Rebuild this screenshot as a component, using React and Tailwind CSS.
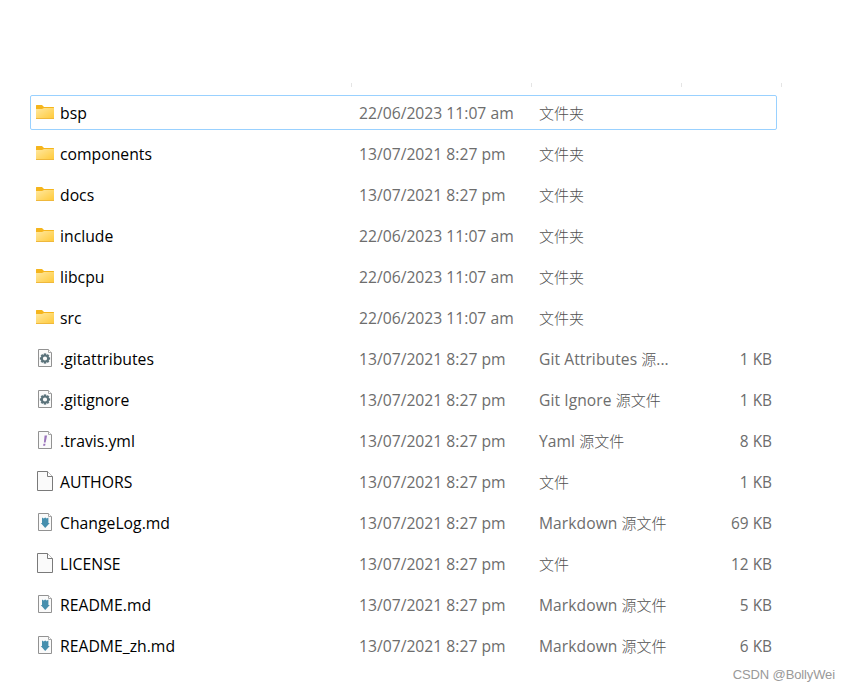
const entries = [
  { icon: 'folder', name: 'bsp', date: '22/06/2023 11:07 am', type: ['', '文件夹'], selected: true },
  { icon: 'folder', name: 'components', date: '13/07/2021 8:27 pm', type: ['', '文件夹'] },
  { icon: 'folder', name: 'docs', date: '13/07/2021 8:27 pm', type: ['', '文件夹'] },
  { icon: 'folder', name: 'include', date: '22/06/2023 11:07 am', type: ['', '文件夹'] },
  { icon: 'folder', name: 'libcpu', date: '22/06/2023 11:07 am', type: ['', '文件夹'] },
  { icon: 'folder', name: 'src', date: '22/06/2023 11:07 am', type: ['', '文件夹'] },
  { icon: 'gear', name: '.gitattributes', date: '13/07/2021 8:27 pm', type: ['Git Attributes ', '源', '...'], size: '1 KB' },
  { icon: 'gear', name: '.gitignore', date: '13/07/2021 8:27 pm', type: ['Git Ignore ', '源文件'], size: '1 KB' },
  { icon: 'yaml', name: '.travis.yml', date: '13/07/2021 8:27 pm', type: ['Yaml ', '源文件'], size: '8 KB' },
  { icon: 'file', name: 'AUTHORS', date: '13/07/2021 8:27 pm', type: ['', '文件'], size: '1 KB' },
  { icon: 'markdown', name: 'ChangeLog.md', date: '13/07/2021 8:27 pm', type: ['Markdown ', '源文件'], size: '69 KB' },
  { icon: 'file', name: 'LICENSE', date: '13/07/2021 8:27 pm', type: ['', '文件'], size: '12 KB' },
  { icon: 'markdown', name: 'README.md', date: '13/07/2021 8:27 pm', type: ['Markdown ', '源文件'], size: '5 KB' },
  { icon: 'markdown', name: 'README_zh.md', date: '13/07/2021 8:27 pm', type: ['Markdown ', '源文件'], size: '6 KB' },
]

const teeth = [0, 45, 90, 135, 180, 225, 270, 315]

function FolderIcon() {
  return (
    <svg width="20" height="23" viewBox="0 0 20 23">
      <defs>
        <linearGradient id="folder-front" x1="0" y1="0" x2="1" y2="1">
          <stop offset="0" stopColor="#ffe8a0" />
          <stop offset="1" stopColor="#ffc937" />
        </linearGradient>
      </defs>
      <path d="M1 5.5Q1 5 1.5 5H7L9 7H18.5Q19 7 19 7.5V12H1Z" fill="#f5b51c" />
      <path d="M1 9H7L9 8H19V18.5Q19 19 18.5 19H1.5Q1 19 1 18.5Z" fill="url(#folder-front)" />
      <path d="M1 18.5H19" stroke="#efb83c" />
    </svg>
  )
}

// Small page used for the types that belong to an editor
function EditorPage({ children }) {
  return (
    <svg width="20" height="23" viewBox="0 0 20 23">
      <path d="M3.5 3.5H13.5L16.5 6.5V20.5H3.5Z" fill="#fafafa" stroke="#929292" />
      <path d="M13.5 3.5V6.5H16.5" fill="#fff" stroke="#a8a8a8" />
      {children}
    </svg>
  )
}

function GearIcon() {
  return (
    <EditorPage>
      <g fill="#5b737b">
        {teeth.map((angle) => (
          <rect key={angle} x="8.8" y="7.4" width="2.4" height="3" transform={`rotate(${angle} 10 12.5)`} />
        ))}
      </g>
      <circle cx="10" cy="12.5" r="3.1" fill="#fafafa" stroke="#5b737b" strokeWidth="2" />
    </EditorPage>
  )
}

function YamlIcon() {
  return (
    <EditorPage>
      <path d="M9.6 7.5H12.1L10.6 14.5H8.9Z" fill="#9a73bb" />
      <path d="M8.5 15.7H10.5L10.1 17.8H8.1Z" fill="#9a73bb" />
    </EditorPage>
  )
}

function MarkdownIcon() {
  return (
    <EditorPage>
      <path d="M7 7.5L8.7 8.5L10.2 7.5L11.7 8.5L13.4 7.5V13H14.8L10.2 18L5.8 13H7Z" fill="#468fae" />
    </EditorPage>
  )
}

function FileIcon() {
  return (
    <svg width="20" height="23" viewBox="0 0 20 23">
      <path d="M2.5 2.5H12.5L17.5 7.5V21.5H2.5Z" fill="#fafafa" stroke="#7a7a7a" />
      <path d="M12.5 2.5V7.5H17.5" fill="#fff" stroke="#7a7a7a" />
    </svg>
  )
}

const icons = {
  folder: FolderIcon,
  gear: GearIcon,
  yaml: YamlIcon,
  file: FileIcon,
  markdown: MarkdownIcon,
}

function Row({ entry }) {
  const Icon = icons[entry.icon]
  const [latin, chinese, ellipsis] = entry.type

  return (
    <div
      className={`flex h-[35px] w-[747px] items-center rounded-xs border text-[15.75px] leading-[22px] whitespace-pre text-[#6d6d6d] ${
        entry.selected ? 'border-[#99d1ff]' : 'border-transparent'
      }`}
    >
      <div className="ml-1 h-[23px] w-[25px] shrink-0 -translate-y-px">
        <Icon />
      </div>
      <div className="w-[299px] shrink-0 text-black">{entry.name}</div>
      <div className="w-[180px] shrink-0 text-[15.7px]">{entry.date}</div>
      <div className="w-[142px] shrink-0 text-[15.6px]">
        <span className="tracking-[0.08px]">{latin}</span>
        <span className="text-[15px] font-light text-[#505050]">{chinese}</span>
        {ellipsis}
      </div>
      <div className="mr-1 flex-1 pt-0.5 text-right text-[15.4px]">{entry.size}</div>
    </div>
  )
}

export default function App() {
  return (
    <main className="flex h-[691px] w-[850px] flex-col overflow-hidden bg-white font-['Open_Sans','Noto_Sans_CJK_SC',sans-serif]">
      {/* Column dividers */}
      <div className="mt-[83px] ml-[351px] flex h-1 shrink-0">
        <div className="w-[180px] border-l border-[#e5e5e5]" />
        <div className="w-[150px] border-l border-[#e5e5e5]" />
        <div className="w-[100px] border-l border-[#e5e5e5]" />
        <div className="border-l border-[#e5e5e5]" />
      </div>

      <div className="mt-2 ml-[30px] flex flex-col gap-1.5">
        {entries.map((entry) => (
          <Row key={entry.name} entry={entry} />
        ))}
      </div>

      <footer className="mt-1 mr-[15px] text-right font-['Liberation_Sans',sans-serif] text-[13px] leading-4 tracking-[-0.12px] text-[#999999]">
        CSDN @BollyWei
      </footer>
    </main>
  )
}
